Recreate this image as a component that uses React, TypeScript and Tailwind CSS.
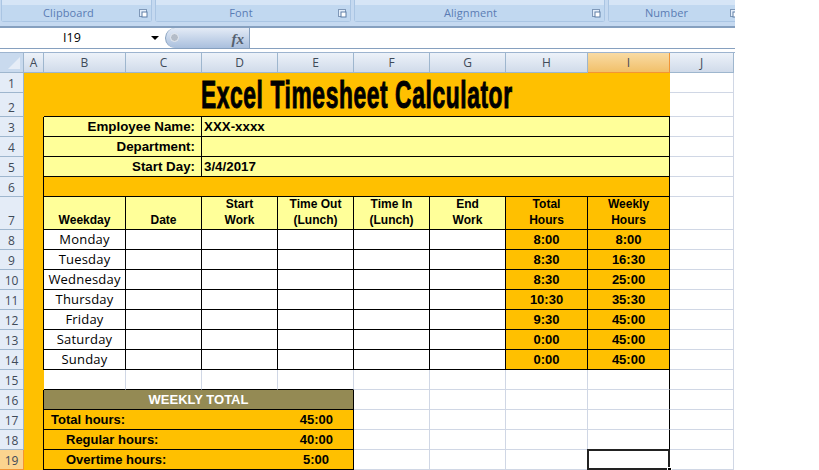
const sans = "font-['Liberation_Sans',Arial,sans-serif]";

const colHeads = [
  { label: "A", w: "w-[20px]" },
  { label: "B", w: "w-[82px]" },
  { label: "C", w: "w-[76px]" },
  { label: "D", w: "w-[76px]" },
  { label: "E", w: "w-[76px]" },
  { label: "F", w: "w-[76px]" },
  { label: "G", w: "w-[76px]" },
  { label: "H", w: "w-[82px]" },
  { label: "I", w: "w-[82px]", active: true },
  { label: "J", w: "w-[64px]" },
];

const rowHeads = [
  { n: 1, h: "h-[20px]" },
  { n: 2, h: "h-[24px]" },
  { n: 3, h: "h-[20px]" },
  { n: 4, h: "h-[20px]" },
  { n: 5, h: "h-[20px]" },
  { n: 6, h: "h-[20px]" },
  { n: 7, h: "h-[33px]" },
  { n: 8, h: "h-[20px]" },
  { n: 9, h: "h-[20px]" },
  { n: 10, h: "h-[20px]" },
  { n: 11, h: "h-[20px]" },
  { n: 12, h: "h-[20px]" },
  { n: 13, h: "h-[20px]" },
  { n: 14, h: "h-[20px]" },
  { n: 15, h: "h-[20px]" },
  { n: 16, h: "h-[20px]" },
  { n: 17, h: "h-[20px]" },
  { n: 18, h: "h-[20px]" },
  { n: 19, h: "h-[20px]", active: true },
];

const days = [
  { name: "Monday", total: "8:00", weekly: "8:00", row: "row-start-7" },
  { name: "Tuesday", total: "8:30", weekly: "16:30", row: "row-start-8" },
  { name: "Wednesday", total: "8:30", weekly: "25:00", row: "row-start-9" },
  { name: "Thursday", total: "10:30", weekly: "35:30", row: "row-start-10" },
  { name: "Friday", total: "9:30", weekly: "45:00", row: "row-start-11" },
  { name: "Saturday", total: "0:00", weekly: "45:00", row: "row-start-12" },
  { name: "Sunday", total: "0:00", weekly: "45:00", row: "row-start-13" },
];

const headers = [
  { a: "Weekday", col: "col-start-2" },
  { a: "Date", col: "col-start-3" },
  { a: "Start", b: "Work", col: "col-start-4" },
  { a: "Time Out", b: "(Lunch)", col: "col-start-5" },
  { a: "Time In", b: "(Lunch)", col: "col-start-6" },
  { a: "End", b: "Work", col: "col-start-7" },
  { a: "Total", b: "Hours", col: "col-start-8", orange: true },
  { a: "Weekly", b: "Hours", col: "col-start-9", orange: true },
];

const info = [
  { label: "Employee Name:", value: "XXX-xxxx", row: "row-start-2" },
  { label: "Department:", value: "", row: "row-start-3" },
  { label: "Start Day:", value: "3/4/2017", row: "row-start-4" },
];

const totals = [
  { label: "Total hours:", value: "45:00", cls: "pl-[7px] pr-[20px] row-start-16" },
  { label: "Regular hours:", value: "40:00", cls: "pl-[22px] pr-[20px] row-start-17" },
  { label: "Overtime hours:", value: "5:00", cls: "pl-[22px] pr-[24px] row-start-18" },
];

const jRows = ["row-start-2", "row-start-3", "row-start-4", "row-start-5", "row-start-6", "row-start-7", "row-start-8", "row-start-9", "row-start-10", "row-start-11", "row-start-12", "row-start-13", "row-start-14", "row-start-15", "row-start-16", "row-start-17", "row-start-18"];

function RibbonGroup({ label, cls }: { label: string; cls: string }) {
  return (
    <div className={`${cls} h-[22px] flex flex-col shrink-0 border-b border-x border-[#aac5e3] rounded-b-[3px]`}>
      <div className="h-[5px] bg-[#d6e5f6]" />
      <div className="relative flex-1 bg-[#c1d8f0] flex items-center justify-center text-[11px] text-[#5a7cb4] font-['Open_Sans',sans-serif] tracking-[0.1px]">
        {label}
        <svg width="9" height="9" viewBox="0 0 9 9" className="absolute right-[3px] top-[4px]">
          <rect x="0.5" y="0.5" width="7" height="7" fill="#e4eefa" stroke="#7f98b8" />
          <rect x="3" y="3" width="5" height="5" fill="#fff" stroke="#5f7ea6" />
        </svg>
      </div>
    </div>
  );
}

export default function App() {
  return (
    <div className={`w-[819px] h-[470px] overflow-hidden bg-white ${sans}`}>
      <div className="w-[735px]">
        {/* Ribbon */}
        <div className="h-[28px] overflow-hidden bg-[#c5d9f0] flex gap-[3px] pl-[1px] items-start border-b-2 border-[#86a0bf]">
          <RibbonGroup label="Clipboard" cls="w-[151px] [&>div:last-child]:pr-[16px]" />
          <RibbonGroup label="Font" cls="w-[196px] [&>div:last-child]:pr-[24px]" />
          <RibbonGroup label="Alignment" cls="w-[251px] [&>div:last-child]:pr-[18px]" />
          <RibbonGroup label="Number" cls="w-[135px] [&>div:last-child]:pr-[18px]" />
        </div>

        {/* Formula bar */}
        <div className="h-[21px] flex items-center bg-white border-b border-[#86a0bf]">
          <div className="w-[165px] relative flex items-center text-[12.5px] text-black font-['Open_Sans',sans-serif]">
            <span className="ml-[63px]">I19</span>
            <span className="absolute left-[151px] top-[7px] w-0 h-0 border-x-[4px] border-x-transparent border-t-[4px] border-t-black" />
          </div>
          <div className="w-[85px] h-[20px] rounded-l-full bg-gradient-to-b from-[#e4ebf6] to-[#a9bfdd] relative border-l border-r border-[#86a0bf]">
            <span className="absolute left-[4px] top-[5px] w-[9px] h-[9px] rounded-full bg-[#b4bcc8] border border-[#e6ebf2]" />
            <span className="absolute right-[5px] top-[0px] font-['Liberation_Serif',serif] italic font-bold text-[15px] text-[#55606e]">fx</span>
          </div>
        </div>

        <div className="h-[4px] bg-white border-b border-[#9db4cf]" />

        {/* Column headers */}
        <div className="flex h-[20px]">
          <div className="w-[24px] bg-[#c9daee] border-r border-b border-[#9eb6ce] relative overflow-hidden">
            <span className="absolute right-[3px] bottom-[3px] w-0 h-0 border-l-[12px] border-l-transparent border-b-[12px] border-b-[#e6edf7]" />
          </div>
          {colHeads.map((c) => (
            <div
              key={c.label}
              className={`${c.w} flex items-center justify-center text-[12px] border-r border-b font-['Open_Sans',sans-serif] ${
                c.active
                  ? "bg-gradient-to-b from-[#f9dba3] to-[#f1c069] border-[#f29536] text-[#3f4a58]"
                  : "bg-gradient-to-b from-[#edf2f9] to-[#d0dbea] border-[#9eb6ce] text-[#3f4a58]"
              }`}
            >
              {c.label}
            </div>
          ))}
        </div>

        <div className="flex">
          {/* Row headers */}
          <div className="w-[24px] shrink-0 flex flex-col">
            {rowHeads.map((r) => (
              <div
                key={r.n}
                className={`${r.h} flex items-end justify-center text-[12px] leading-[16px] border-r border-b font-['Open_Sans',sans-serif] ${
                  r.active
                    ? "bg-[#fbd48f] border-[#f29536] text-[#3f4a58]"
                    : "bg-[#e4ecf7] border-[#9eb6ce] text-[#3f4a58]"
                }`}
              >
                {r.n}
              </div>
            ))}
          </div>

          {/* Sheet */}
          <div className="grid grid-cols-[20px_82px_76px_76px_76px_76px_76px_82px_82px_64px] grid-rows-[44px_20px_20px_20px_20px_33px_repeat(12,20px)] w-[710px]">
            {/* Column A band */}
            <div className="col-start-1 row-start-1 bg-[#ffc000]" />
            <div className="col-start-1 row-start-2 row-span-12 bg-[#ffc000] border-r border-black" />
            <div className="col-start-1 row-start-14 bg-[#ffc000]" />
            <div className="col-start-1 row-start-15 row-span-4 bg-[#ffc000] border-r border-black" />

            {/* Title */}
            <div className="col-start-2 col-span-8 row-start-1 bg-[#ffc000] border-b border-black flex items-center justify-center overflow-hidden">
              <span className="whitespace-nowrap scale-x-[0.6] text-black font-bold text-[38px] leading-none tracking-[1px] [-webkit-text-stroke:1px_black]">
                Excel Timesheet Calculator
              </span>
            </div>
            <div className="col-start-10 row-start-1 flex flex-col">
              <div className="h-[20px] border-r border-b border-[#d0d7e5]" />
              <div className="flex-1 border-r border-b border-[#d0d7e5]" />
            </div>

            {/* Employee block */}
            {info.map((row) => (
              <div key={row.label} className="contents">
                <div className={`col-start-2 col-span-2 ${row.row} bg-[#ffff99] border-r border-b border-black flex items-center justify-end pr-[6px] text-[13.33px] font-bold text-black`}>
                  {row.label}
                </div>
                <div className={`col-start-4 col-span-6 ${row.row} bg-[#ffff99] border-r border-b border-black flex items-center pl-[2px] text-[13.33px] font-bold text-black`}>
                  {row.value}
                </div>
              </div>
            ))}

            {/* Orange spacer row */}
            <div className="col-start-2 col-span-8 row-start-5 bg-[#ffc000] border-r border-b border-black" />

            {/* Table header */}
            {headers.map((h) => (
              <div
                key={h.a}
                className={`${h.col} row-start-6 border-r border-b border-black flex flex-col items-center justify-end text-[12px] leading-[16px] font-bold text-black pb-[1px] ${h.orange ? "bg-[#ffc000]" : "bg-[#ffff99]"}`}
              >
                <span>{h.a}</span>
                {h.b && <span>{h.b}</span>}
              </div>
            ))}

            {/* Day rows */}
            {days.map((d) => (
              <div key={d.name} className="contents">
                <div className={`col-start-2 ${d.row} border-r border-b border-black flex items-center justify-center pt-[1px] text-[13px] tracking-[0.2px] text-black font-['Open_Sans',sans-serif]`}>
                  {d.name}
                </div>
                <div className={`col-start-3 ${d.row} border-r border-b border-black`} />
                <div className={`col-start-4 ${d.row} border-r border-b border-black`} />
                <div className={`col-start-5 ${d.row} border-r border-b border-black`} />
                <div className={`col-start-6 ${d.row} border-r border-b border-black`} />
                <div className={`col-start-7 ${d.row} border-r border-b border-black`} />
                <div className={`col-start-8 ${d.row} bg-[#ffc000] border-r border-b border-black flex items-center justify-center pt-[1px] text-[13px] font-bold text-black`}>
                  {d.total}
                </div>
                <div className={`col-start-9 ${d.row} bg-[#ffc000] border-r border-b border-black flex items-center justify-center pt-[1px] text-[13px] font-bold text-black`}>
                  {d.weekly}
                </div>
              </div>
            ))}

            {/* Row 15 */}
            <div className="col-start-2 row-start-14 border-r border-b border-r-[#d0d7e5] border-b-black" />
            <div className="col-start-3 row-start-14 border-r border-b border-r-[#d0d7e5] border-b-black" />
            <div className="col-start-4 row-start-14 border-r border-b border-r-[#d0d7e5] border-b-black" />
            <div className="col-start-5 row-start-14 border-r border-b border-r-[#d0d7e5] border-b-black" />
            <div className="col-start-6 row-start-14 border-r border-b border-[#d0d7e5]" />
            <div className="col-start-7 row-start-14 border-r border-b border-[#d0d7e5]" />
            <div className="col-start-8 row-start-14 border-r border-b border-[#d0d7e5]" />
            <div className="col-start-9 row-start-14 border-r border-b border-r-black border-b-[#d0d7e5]" />

            {/* Weekly total */}
            <div className="col-start-2 col-span-4 row-start-15 bg-[#948a54] border-r border-b border-black flex items-center justify-center text-[13px] font-bold text-white">
              WEEKLY TOTAL
            </div>
            {totals.map((t) => (
              <div
                key={t.label}
                className={`col-start-2 col-span-4 bg-[#ffc000] border-r border-b border-black flex items-center justify-between pt-[1px] text-[13px] font-bold text-black ${t.cls}`}
              >
                <span>{t.label}</span>
                <span>{t.value}</span>
              </div>
            ))}

            {/* Empty grid cells right of the table */}
            {jRows.map((r) => (
              <div key={r} className={`col-start-10 ${r} border-r border-b border-[#d0d7e5]`} />
            ))}
            {["row-start-15", "row-start-16", "row-start-17", "row-start-18"].map((r) => (
              <div key={r} className="contents">
                <div className={`col-start-6 ${r} border-r border-b border-[#d0d7e5]`} />
                <div className={`col-start-7 ${r} border-r border-b border-[#d0d7e5]`} />
                <div className={`col-start-8 ${r} border-r border-b border-[#d0d7e5]`} />
                {r === "row-start-18" ? (
                  <div className={`col-start-9 ${r} relative border-r border-b border-r-black border-b-[#d0d7e5]`}>
                    {/* Selected cell I19 */}
                    <div className="absolute -left-[1px] -top-[1px] -right-[1px] -bottom-[1px] border-2 border-[#222]" />
                    <div className="absolute -right-[3px] -bottom-[3px] w-[5px] h-[5px] bg-black border border-white" />
                  </div>
                ) : (
                  <div className={`col-start-9 ${r} border-r border-b border-r-black border-b-[#d0d7e5]`} />
                )}
              </div>
            ))}
          </div>
        </div>
      </div>
    </div>
  );
}
